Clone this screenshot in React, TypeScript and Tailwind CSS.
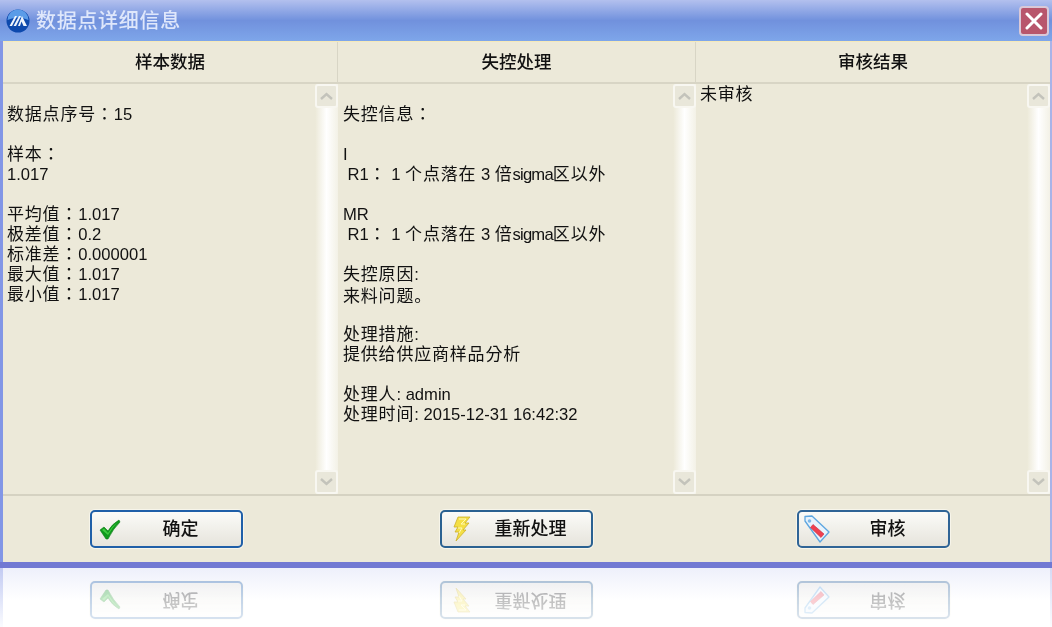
import type { FC, ReactNode } from 'react'

const font = `font-['Liberation_Sans','Noto_Sans_CJK_TC',sans-serif]`

const CheckIcon: FC = () => (
  <svg width="22" height="22" viewBox="0 0 22 22">
    <path d="M1 12 L5 9 L9 13 Q13 6 20 2 L21 4 Q14 11 9 21 L7 21 Z" fill="#0f9a1c" stroke="#0b7a14" strokeWidth="0.6" />
    <path d="M3 12 L5 10.5 L9 15 Q13 8 19 3.5 Q13 10 9 17 Z" fill="#3fc93f" />
  </svg>
)

const BoltIcon: FC = () => (
  <svg width="18" height="26" viewBox="0 0 18 26">
    <path d="M5 1 L17 1 L12 7 L16 7 L10 14 L13 14 L3 25 L6 16 L2 16 L5 11 L1 11 Z" fill="#f4df45" stroke="#cdb02a" strokeWidth="0.8" strokeLinejoin="round" />
    <path d="M6 3 L13 3 L8 8 L12 8 M5 12 L9 12 L6 17" fill="none" stroke="#fff9b8" strokeWidth="1" />
  </svg>
)

const TagIcon: FC = () => (
  <svg width="26" height="28" viewBox="0 0 26 28" className="-mr-[2px]">
    <path d="M1 6 L1 1.5 L8 1 L25 17 L16 27 Z" fill="#e8f3fc" stroke="#5da6e0" strokeWidth="1.3" strokeLinejoin="round" />
    <circle cx="5.5" cy="6" r="1.8" fill="#7fb9e8" />
    <path d="M9 9.5 L20 19 L17 22.5 L6.5 12.5 Z" fill="#ef4050" stroke="#c92a3a" strokeWidth="0.6" />
  </svg>
)

const Logo: FC = () => (
  <svg width="24" height="24" viewBox="0 0 24 24" className="shrink-0">
    <circle cx="12" cy="12" r="11.5" fill="#0d49ad" />
    <path d="M1.5 11 A10.5 10.5 0 0 1 22.5 11 Q12 6 1.5 11 Z" fill="#5b9ce8" />
    <path d="M3.5 17 L9 7 L11 7 L6 17 Z M7.5 17 L13 7 L15 7 L10 17 Z M12 17 L16 7 L21 17 L17.5 17 L15.5 12.5 L14 17 Z" fill="#eef4fd" />
  </svg>
)

const ScrollArrow: FC<{ up?: boolean }> = ({ up }) => (
  <div className="flex h-[24px] w-[23px] items-center justify-center rounded-[3px] border-2 border-[#f8f7f1] bg-[#e9e7da]">
    <svg width="15" height="10" viewBox="0 0 15 10">
      <path d={up ? 'M2 8 L7.5 3 L13 8' : 'M2 2 L7.5 7 L13 2'} fill="none" stroke="#c3c3bb" strokeWidth="2.4" />
    </svg>
  </div>
)

const ScrollBar: FC = () => (
  <div className="flex h-full w-[23px] shrink-0 flex-col bg-gradient-to-r from-[#ece9d8] via-white to-[#f3f1e6]">
    <ScrollArrow up />
    <div className="flex-1" />
    <ScrollArrow />
  </div>
)

// CJK runs are wider in the picture than the latin ones, so they get their own size
const MixedLine: FC<{ text: string }> = ({ text }) => (
  <div className="h-[20px]">
    {text.split(/([\u3000-\u9fff\uff00-\uffef]+)/).map((part, i) =>
      i % 2 === 1 ? (
        <span
          key={i}
          className={`text-[17px] tracking-[0.8px] ${part.includes('。') ? "font-['Noto_Sans_CJK_SC',sans-serif]" : ''}`}
        >
          {part}
        </span>
      ) : (
        <span key={i} className={part === 'sigma' ? 'tracking-[-0.8px]' : ''}>
          {part}
        </span>
      ),
    )}
  </div>
)

const Panel: FC<{ text: string; inset: string }> = ({ text, inset }) => (
  <div className="flex h-full min-w-0">
    <div className={`flex-1 whitespace-pre text-[16.6px] leading-[20px] text-[#111] ${inset}`}>
      {text.split('\n').map((line, i) => (
        <MixedLine key={i} text={line} />
      ))}
    </div>
    <ScrollBar />
  </div>
)

const ActionButton: FC<{ icon: ReactNode; label: string; border: string }> = ({ icon, label, border }) => (
  <div className={`flex h-[38px] w-[153px] items-center rounded-[5px] border-2 bg-gradient-to-b from-[#fbfbf8] to-[#e6e4dc] shadow-[0_0_0_1px_#f7f5ea] ${border}`}>
    <span className="flex w-[29px] shrink-0 justify-end">{icon}</span>
    <span className="flex-1 text-center text-[18px] font-medium text-[#111]">{label}</span>
  </div>
)

const ButtonRow: FC = () => (
  <div className="grid h-full grid-cols-[335px_358px_354px] items-center">
    <div className="flex justify-center pr-[9px]">
      <ActionButton icon={<CheckIcon />} label="确定" border="border-[#1f5fa8]" />
    </div>
    <div className="flex justify-center pr-[2px]">
      <ActionButton icon={<BoltIcon />} label="重新处理" border="border-[#2a6191]" />
    </div>
    <div className="flex justify-center">
      <ActionButton icon={<TagIcon />} label="审核" border="border-[#2f6496]" />
    </div>
  </div>
)

const sampleText = `数据点序号：15

样本：
1.017

平均值：1.017
极差值：0.2
标准差：0.000001
最大值：1.017
最小值：1.017`

const handlingText = `失控信息：

I
 R1： 1 个点落在 3 倍sigma区以外

MR
 R1： 1 个点落在 3 倍sigma区以外

失控原因:
来料问题。

处理措施:
提供给供应商样品分析

处理人: admin
处理时间: 2015-12-31 16:42:32`

export default function App() {
  return (
    <div className={`flex h-[627px] w-[1052px] flex-col overflow-hidden bg-white blur-[0.35px] ${font}`}>
      <div className="flex h-[41px] shrink-0 items-center bg-gradient-to-b from-[#b3c0ee] via-[#7191dd] to-[#7ea6ea] pl-[6px] pr-[3px]">
        <Logo />
        <span className="ml-[6px] flex-1 text-[20px] font-medium tracking-[0.7px] text-[#dfe7fb]">数据点详细信息</span>
        <div className="flex h-[30px] w-[30px] items-center justify-center rounded-[4px] border-2 border-[#d9c9d8] bg-[#b8566c]">
          <svg width="18" height="18" viewBox="0 0 18 18">
            <path d="M2 2 L16 16 M16 2 L2 16" stroke="#fff" strokeWidth="3" strokeLinecap="round" />
          </svg>
        </div>
      </div>

      <div className="flex h-[521px] shrink-0 flex-col border-l-[3px] border-r-[2px] border-l-[#8296e6] border-r-[#a9b3e8] bg-[#ece9d9]">
        <div className="grid h-[43px] shrink-0 grid-cols-[335px_358px_354px] border-b-2 border-t border-b-[#d8d5c5] border-t-[#f5e9b8] text-[17.5px] text-[#111]">
          <div className="flex items-center justify-center border-r border-[#d8d5c5] font-medium">样本数据</div>
          <div className="flex items-center justify-center border-r border-[#d8d5c5] font-medium">失控处理</div>
          <div className="flex items-center justify-center font-medium">审核结果</div>
        </div>
        <div className="grid h-[412px] shrink-0 grid-cols-[335px_358px_354px] border-b-2 border-[#d5d2c2]">
          <Panel text={sampleText} inset="pl-[4px] pt-[21px]" />
          <Panel text={handlingText} inset="pl-[5px] pt-[21px]" />
          <Panel text="未审核" inset="pl-[4px] pt-px" />
        </div>
        <div className="flex-1">
          <ButtonRow />
        </div>
      </div>

      <div className="h-[6px] shrink-0 bg-[#7179d3]" />

      <div className="relative flex-1 bg-gradient-to-b from-[#eef0fb] via-white to-white">
        <div className="absolute inset-y-0 left-0 w-[3px] bg-gradient-to-b from-[#c3cbf2] to-white" />
        <div className="absolute inset-y-0 right-0 w-[2px] bg-gradient-to-b from-[#d5daf5] to-white" />
        <div className="h-[64px] -scale-y-100 pl-[3px] opacity-40 [mask-image:linear-gradient(to_top,black,rgba(0,0,0,0.3))]">
          <ButtonRow />
        </div>
      </div>
    </div>
  )
}
